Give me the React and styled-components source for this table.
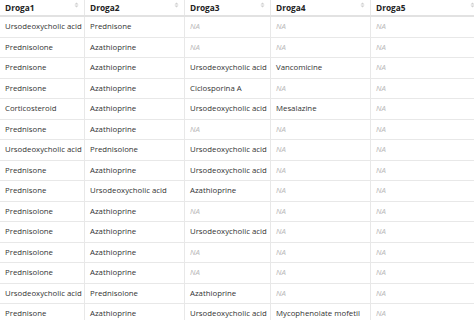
import React from "react";
import styled, { createGlobalStyle } from "styled-components";

const GlobalStyle = createGlobalStyle`
  html, body {
    margin: 0;
    padding: 0;
    background: #fff;
    overflow: hidden;
  }
`;

const COLUMNS = [
  { key: "d1", label: "Droga1", width: 85 },
  { key: "d2", label: "Droga2", width: 100 },
  { key: "d3", label: "Droga3", width: 86 },
  { key: "d4", label: "Droga4", width: 100 },
  { key: "d5", label: "Droga5", width: 110 },
];

const rows = [
  ["Ursodeoxycholic acid", "Prednisone", null, null, null],
  ["Prednisolone", "Azathioprine", null, null, null],
  ["Prednisone", "Azathioprine", "Ursodeoxycholic acid", "Vancomicine", null],
  ["Prednisone", "Azathioprine", "Ciclosporina A", null, null],
  ["Corticosteroid", "Azathioprine", "Ursodeoxycholic acid", "Mesalazine", null],
  ["Prednisone", "Azathioprine", null, null, null],
  ["Ursodeoxycholic acid", "Prednisolone", "Ursodeoxycholic acid", null, null],
  ["Prednisone", "Azathioprine", "Ursodeoxycholic acid", null, null],
  ["Prednisone", "Ursodeoxycholic acid", "Azathioprine", null, null],
  ["Prednisolone", "Azathioprine", null, null, null],
  ["Prednisolone", "Azathioprine", "Ursodeoxycholic acid", null, null],
  ["Prednisolone", "Azathioprine", null, null, null],
  ["Prednisolone", "Azathioprine", null, null, null],
  ["Ursodeoxycholic acid", "Prednisolone", "Azathioprine", null, null],
  ["Prednisone", "Azathioprine", "Ursodeoxycholic acid", "Mycophenolate mofetil", null],
];

const Table = styled.div`
  width: 481px;
  font-family: "Open Sans", "Noto Sans", sans-serif;
  font-size: 7.8px;
  color: #333;
`;

const Row = styled.div`
  display: grid;
  grid-template-columns: ${COLUMNS.map((c) => c.width + "px").join(" ")};
  height: ${(p) => (p.$header ? "17px" : "20.5px")};
  border-bottom: ${(p) => (p.$header ? "2px solid #e2e2e2" : "1px solid #e8e8e8")};
  box-sizing: border-box;
`;

const Cell = styled.div`
  position: relative;
  display: flex;
  align-items: center;
  padding: 0 5px 1px;
  border-right: 1px solid #e8e8e8;
  white-space: nowrap;
  font-weight: ${(p) => (p.$header ? 700 : 400)};
  font-size: ${(p) => (p.$header ? "8.3px" : "inherit")};
  color: ${(p) => (p.$header ? "#222" : "#333")};
`;

const Missing = styled.span`
  font-style: italic;
  color: #b8b8b8;
`;

const SortIcon = styled.svg`
  position: absolute;
  right: 5px;
  top: 2px;
  width: 5px;
  height: 6px;
`;

const Sort = () => (
  <SortIcon viewBox="0 0 5 6">
    <path d="M0.5 2.4 L2.5 0.5 L4.5 2.4 Z M0.5 3.6 L2.5 5.5 L4.5 3.6 Z" fill="#d0d0d0" />
  </SortIcon>
);

export default function App() {
  return (
    <>
      <GlobalStyle />
      <Table>
        <Row $header>
          {COLUMNS.map((c) => (
            <Cell key={c.key} $header>
              {c.label}
              <Sort />
            </Cell>
          ))}
        </Row>
        {rows.map((r, i) => (
          <Row key={i}>
            {r.map((v, j) => (
              <Cell key={j}>{v ? v : <Missing>NA</Missing>}</Cell>
            ))}
          </Row>
        ))}
      </Table>
    </>
  );
}
